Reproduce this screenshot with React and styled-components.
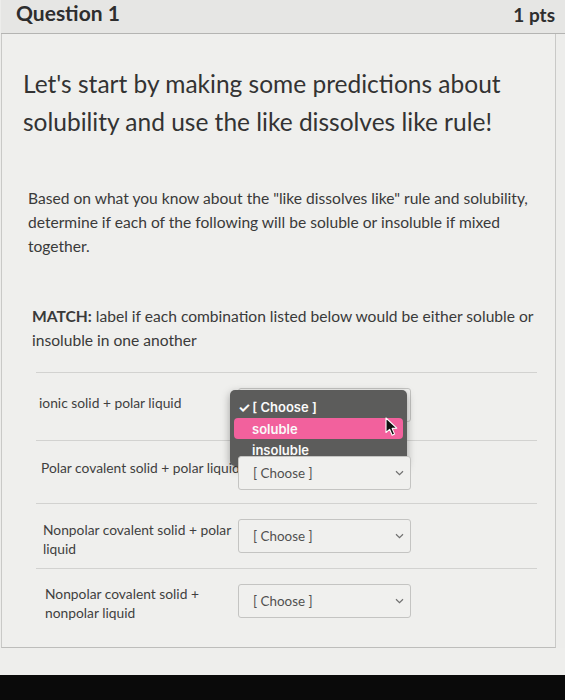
import React from "react";
import styled, { createGlobalStyle } from "styled-components";

const Global = createGlobalStyle`
  html, body { margin: 0; padding: 0; background: #ededeb; }
  body { font-family: Lato, "Open Sans", sans-serif; color: #3b3b3b; }
  * { box-sizing: border-box; }
`;

const Page = styled.div`
  width: 565px;
  height: 700px;
  display: flex;
  flex-direction: column;
  background: #ededeb;
  overflow: hidden;
`;

const Panel = styled.section`
  margin-left: 1px;
  width: 555px;
  height: 648px;
  border-left: 1px solid #c9c9c7;
  border-right: 1px solid #c9c9c7;
  border-bottom: 1px solid #bdbdbb;
  background: #efefed;
  display: flex;
  flex-direction: column;
`;

const Header = styled.header`
  height: 34px;
  flex: none;
  background: #e6e6e4;
  border-bottom: 1px solid #b4b4b2;
  display: flex;
  justify-content: space-between;
  align-items: flex-start;
  padding: 0 14px 0 15px;
  margin-left: -1px;
  margin-right: -14px;
`;

const HeaderText = styled.span`
  line-height: 22px;
  font-weight: 700;
  color: #2e2e2e;
  padding-top: ${(p) => (p.$right ? 4 : 2)}px;
  font-size: ${(p) => (p.$right ? 19 : 21)}px;
`;

const Body = styled.div`
  padding: 0 0 0 21px;
  display: flex;
  flex-direction: column;
`;

const Lead = styled.h2`
  margin: 31px 0 0 0;
  font-size: 24.5px;
  line-height: 38px;
  font-weight: 400;
  color: #333;
`;

const Para = styled.p`
  margin: ${(p) => p.$top}px 0 0 ${(p) => p.$indent}px;
  font-size: 15.6px;
  line-height: 24px;
  color: #3a3a3a;
  width: ${(p) => p.$width}px;
`;

const Rows = styled.div`
  margin: 20px 0 0 13px;
  width: 501px;
  display: flex;
  flex-direction: column;
`;

const Row = styled.div`
  border-top: 1px solid #d2d2d0;
  height: ${(p) => p.$h}px;
  display: flex;
  align-items: flex-start;
  padding: 0 0 0 ${(p) => p.$pad}px;
`;

const Label = styled.div`
  width: ${(p) => 202 - p.$pad}px;
  flex: none;
  padding-top: ${(p) => p.$top}px;
  font-size: 13.8px;
  line-height: 19px;
  color: #3f3f3f;
  white-space: ${(p) => (p.$nowrap ? "nowrap" : "normal")};
`;

const SelectBox = styled.div`
  position: relative;
  z-index: 1;
  margin-top: 15px;
  width: 173px;
  height: 34px;
  border: 1px solid #c4c4c2;
  border-radius: 3px;
  background: #f0f0ee;
  display: flex;
  align-items: center;
  justify-content: space-between;
  padding: 0 6px 0 14px;
  font-size: 13.4px;
  color: #505050;
`;

const Chevron = styled.svg`
  width: 9px;
  height: 6px;
  flex: none;
`;

const Menu = styled.div`
  position: absolute;
  left: -9px;
  top: 1px;
  width: 177px;
  height: 76px;
  background: #5c5c5b;
  border-radius: 5px;
  box-shadow: 0 3px 8px rgba(0, 0, 0, 0.35);
  padding: 6px 4px;
  display: flex;
  flex-direction: column;
  font-family: Inter, "Open Sans", sans-serif;
  font-size: 13px;
  font-weight: 600;
  color: #fafafa;
  z-index: 5;
`;

const MenuItem = styled.div`
  height: ${(p) => (p.$h ? p.$h : 21)}px;
  display: flex;
  align-items: center;
  padding-left: ${(p) => (p.$check ? 4 : 18)}px;
  border-radius: 4px;
  background: ${(p) => (p.$active ? "#f2619d" : "transparent")};
  gap: 2px;
`;

const Check = styled.span`
  font-size: 14px;
  font-weight: 700;
`;

const Cursor = styled.svg`
  position: absolute;
  left: 155px;
  top: 27px;
  width: 13px;
  height: 20px;
`;

const Footer = styled.div`
  flex: none;
  height: 27px;
  background: #eeeeec;
`;

const Black = styled.div`
  flex: 1;
  background: #0a0a0a;
`;

function ChevronIcon() {
  return (
    <Chevron viewBox="0 0 9 6">
      <path d="M1 1.2 L4.5 4.6 L8 1.2" fill="none" stroke="#707070" strokeWidth="1.2" />
    </Chevron>
  );
}

const rows = [
  { label: "ionic solid + polar liquid", h: 68, pad: 3, top: 20, open: true },
  { label: "Polar covalent solid + polar liquid", h: 63, pad: 5, top: 17, nowrap: true },
  { label: "Nonpolar covalent solid + polar liquid", h: 65, pad: 7, top: 16 },
  { label: "Nonpolar covalent solid + nonpolar liquid", h: 64, pad: 9, top: 15 },
];

export default function App() {
  return (
    <Page>
      <Global />
      <Panel>
        <Header>
          <HeaderText>Question 1</HeaderText>
          <HeaderText $right>1 pts</HeaderText>
        </Header>
        <Body>
          <Lead>
            Let's start by making some predictions about
            <br />
            solubility and use the like dissolves like rule!
          </Lead>
          <Para $top={45} $indent={5} $width={515}>
            Based on what you know about the "like dissolves like" rule and solubility,
            determine if each of the following will be soluble or insoluble if mixed
            together.
          </Para>
          <Para $top={46} $indent={9} $width={515}>
            <strong>MATCH:</strong> label if each combination listed below would be either soluble or insoluble in one another
          </Para>
          <Rows>
            {rows.map((r, i) => (
              <Row key={i} $h={r.h} $pad={r.pad}>
                <Label $pad={r.pad} $top={r.top} $nowrap={r.nowrap}>
                  {r.label}
                </Label>
                <SelectBox>
                  <span>[ Choose ]</span>
                  <ChevronIcon />
                  {r.open && (
                    <Menu>
                      <MenuItem $check $h={22}>
                        <Check>✓</Check>
                        <span>[ Choose ]</span>
                      </MenuItem>
                      <MenuItem $active>soluble</MenuItem>
                      <MenuItem>insoluble</MenuItem>
                      <Cursor viewBox="0 0 13 20">
                        <path
                          d="M1 1 L1 15.5 L4.6 12.3 L7.2 18.2 L9.6 17.1 L7.1 11.4 L11.8 11.1 Z"
                          fill="#111"
                          stroke="#fff"
                          strokeWidth="1.1"
                          strokeLinejoin="round"
                        />
                      </Cursor>
                    </Menu>
                  )}
                </SelectBox>
              </Row>
            ))}
          </Rows>
        </Body>
      </Panel>
      <Footer />
      <Black />
    </Page>
  );
}
